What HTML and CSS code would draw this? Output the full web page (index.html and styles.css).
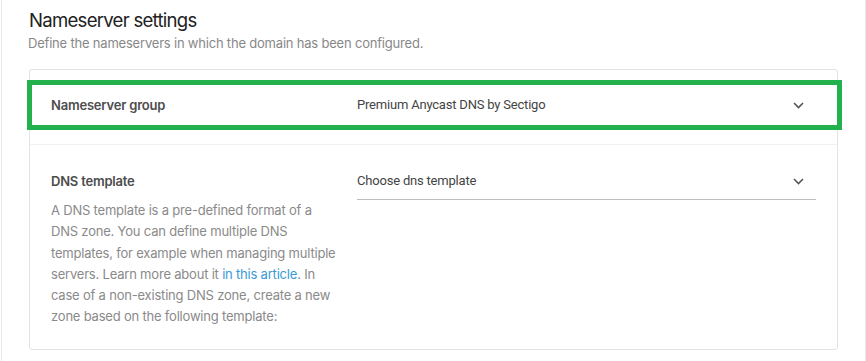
FILE: index.html
```html
<!DOCTYPE html>
<html>
<head>
<meta charset="utf-8">
<link rel="stylesheet" href="styles.css">
</head>
<body>
<div class="page">
  <h1 class="title">Nameserver settings</h1>
  <p class="subtitle">Define the nameservers in which the domain has been configured.</p>
  <div class="card">
    <div class="row row-first">
      <div class="label-col">
        <div class="label">Nameserver group</div>
      </div>
      <div class="field-col">
        <div class="select select-plain">
          <span class="select-text">Premium Anycast DNS by Sectigo</span>
          <svg class="chev" width="11" height="7" viewBox="0 0 11 7"><polyline points="1,1 5.5,5.5 10,1" fill="none" stroke="#555" stroke-width="1.6"/></svg>
        </div>
      </div>
      <div class="highlight"></div>
    </div>
    <div class="row row-second">
      <div class="label-col">
        <div class="label">DNS template</div>
        <p class="desc">A DNS template is a pre-defined format of a DNS zone. You can define multiple DNS templates, for example when managing multiple servers. Learn more about it <a class="link" href="#">in this article</a>. In case of a non-existing DNS zone, create a new zone based on the following template:</p>
      </div>
      <div class="field-col">
        <div class="select">
          <span class="select-text">Choose dns template</span>
          <svg class="chev" width="11" height="7" viewBox="0 0 11 7"><polyline points="1,1 5.5,5.5 10,1" fill="none" stroke="#555" stroke-width="1.6"/></svg>
        </div>
      </div>
    </div>
  </div>
</div>
</body>
</html>
```
FILE: styles.css
```css
html, body {
  margin: 0;
  padding: 0;
  background: #fff;
}
body {
  font-family: Inter, "Noto Sans", sans-serif;
}
.page {
  margin-left: 1px;
  width: 863px;
  height: 361px;
  border-left: 1px solid #e6e6e6;
  border-right: 1px solid #e6e6e6;
  box-sizing: content-box;
}
.title {
  margin: 0;
  padding: 8px 0 0 27px;
  font-size: 18.6px;
  line-height: 24px;
  font-weight: 400;
  letter-spacing: -0.75px;
  color: #222;
}
.subtitle {
  margin: 2px 0 0 26px;
  font-size: 13px;
  line-height: 18px;
  letter-spacing: -0.2px;
  color: #888;
}
.card {
  margin: 17px 0 0 27px;
  width: 807px;
  border: 1px solid #e3e3e3;
  border-radius: 3px;
}
.row {
  display: flex;
  padding: 0 21px;
  position: relative;
}
.row-first {
  padding-top: 26px;
  padding-bottom: 20px;
  border-bottom: 1px solid #f1f1f1;
}
.row-second {
  padding-top: 27px;
  padding-bottom: 21px;
}
.label-col {
  width: 40%;
  box-sizing: border-box;
  padding-right: 15px;
}
.field-col {
  width: 60%;
}
.label {
  font-size: 13px;
  line-height: 18px;
  font-weight: 600;
  letter-spacing: -0.2px;
  color: #4d4d4d;
}
.desc {
  margin: 10px 0 0;
  font-size: 13px;
  line-height: 21.3px;
  letter-spacing: -0.2px;
  color: #8a8a8a;
}
.link {
  color: #3a9ad6;
  text-decoration: none;
}
.select {
  display: flex;
  align-items: center;
  justify-content: space-between;
  padding-bottom: 9px;
  border-bottom: 1px solid #bdbdbd;
}
.select-plain {
  border-bottom-color: transparent;
}
.select-text {
  font-family: Roboto, "Liberation Sans", sans-serif;
  font-size: 13px;
  line-height: 18px;
  letter-spacing: -0.2px;
  color: #444;
}
.chev {
  margin-right: 12px;
  display: block;
}
.highlight {
  position: absolute;
  left: -3px;
  right: -5px;
  top: 10px;
  height: 40px;
  border: 5px solid #22b14c;
  pointer-events: none;
}
```
